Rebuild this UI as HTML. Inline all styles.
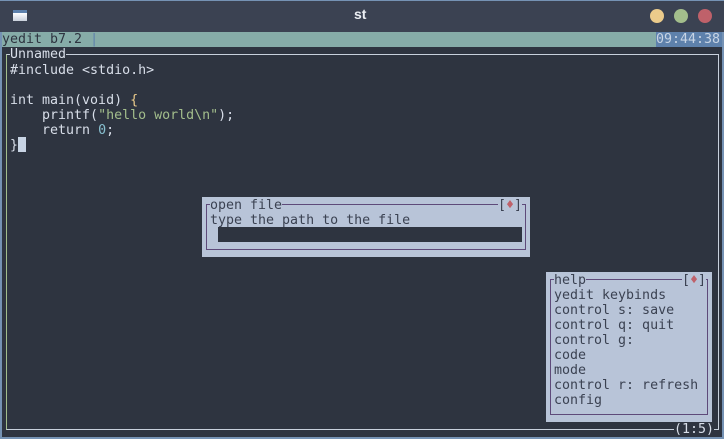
<!DOCTYPE html>
<html><head><style>
*{margin:0;padding:0;box-sizing:border-box}
body{width:724px;height:439px;background:#7592b4;position:relative;overflow:hidden;font-family:"DejaVu Sans Mono",monospace;font-size:13.3px;line-height:15px}
.a{position:absolute;white-space:pre}
.s{padding-top:1px}
#title{left:0;top:1px;width:724px;height:31px;background:#3b4252}
#term{left:2px;top:32px;width:720px;height:405px;background:#2e3440}
.c{position:absolute;width:14px;height:14px;border-radius:50%;top:9px}
.t{color:#d8dee9}
</style></head><body>
<div class="a" id="title"></div>
<div class="a" style="left:13px;top:10px;width:14px;height:11px;background:linear-gradient(#fff,#c9d0dc);border-top:3px solid #5e81ac"></div>
<div class="a" style="left:354px;top:7px;color:#eceff4;font-family:'Liberation Sans',sans-serif;font-weight:bold;font-size:14px">st</div>
<div class="c" style="left:650px;background:#ebcb8b"></div>
<div class="c" style="left:674px;background:#a3be8c"></div>
<div class="c" style="left:698px;background:#bf616a"></div>
<div class="a" id="term"></div>
<div class="a s" style="left:2px;top:32px;width:654px;height:15px;background:#86aca8;color:#2e3440;padding-top:0">yedit b7.2 <span style="color:#5e81ac">|</span></div>
<div class="a" style="left:656px;top:32px;width:66px;height:15px;background:#5e81ac;color:#c8d4e4">09:44:38</div>
<div class="a" style="left:6px;top:54px;width:713px;height:376px;border:1px solid #c8d0dc;border-left-color:#a3be8c"></div>
<div class="a t" style="left:10px;top:47px;height:15px;background:#2e3440">Unnamed</div>
<div class="a t" style="left:10px;top:63px">#include &lt;stdio.h&gt;

int main(void) <span style="color:#ebcb8b">{</span>
    printf(<span style="color:#a3be8c">"hello world\n"</span>);
    return <span style="color:#88c0d0">0</span>;
}</div>
<div class="a" style="left:18px;top:137px;width:8px;height:15px;background:#c8d4e4"></div>
<div class="a t" style="left:674px;top:422px;background:#2e3440">(1:5)</div>
<div class="a" style="left:202px;top:197px;width:328px;height:60px;background:#b8c4d8"></div>
<div class="a" style="left:206px;top:204px;width:320px;height:46px;border:1px solid #5e4a7a"></div>
<div class="a" style="left:210px;top:197px;height:15px;color:#3b4252;background:#b8c4d8;padding-top:1px">open file</div>
<div class="a" style="left:498px;top:197px;height:15px;color:#3b4252;background:#b8c4d8;padding-top:1px">[<span style="color:#bf616a">♦</span>]</div>
<div class="a" style="left:210px;top:213px;color:#3b4252">type the path to the file</div>
<div class="a" style="left:218px;top:227px;width:304px;height:15px;background:#2e3440"></div>
<div class="a" style="left:546px;top:272px;width:166px;height:150px;background:#b8c4d8"></div>
<div class="a" style="left:550px;top:279px;width:158px;height:136px;border:1px solid #5e4a7a"></div>
<div class="a" style="left:554px;top:272px;height:15px;color:#3b4252;background:#b8c4d8;padding-top:1px">help</div>
<div class="a" style="left:682px;top:272px;height:15px;color:#3b4252;background:#b8c4d8;padding-top:1px">[<span style="color:#bf616a">♦</span>]</div>
<div class="a" style="left:554px;top:288px;color:#3b4252">yedit keybinds
control s: save
control q: quit
control g:
code
mode
control r: refresh
config</div>
</body></html>
